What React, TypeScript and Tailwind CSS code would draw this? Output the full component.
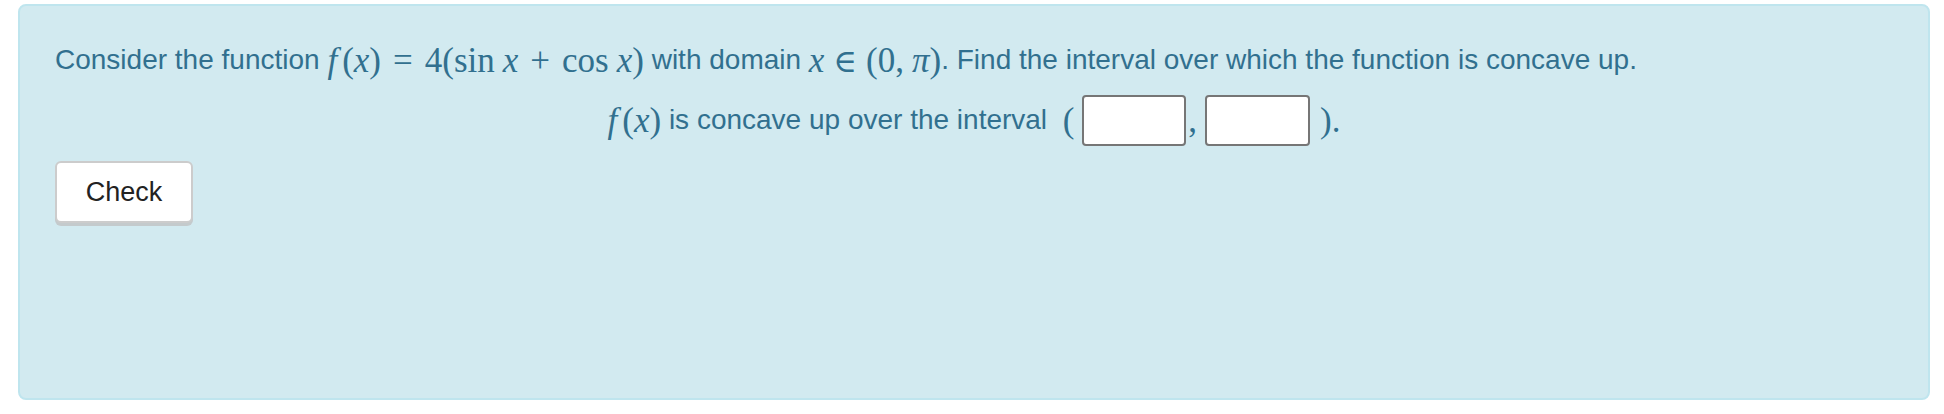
import React from "react";

const M = ({ children }: { children: React.ReactNode }) => (
  <span className="font-['Liberation_Serif',serif] text-[35px] leading-none">{children}</span>
);
const F = () => <i className="italic mr-[5px]">f</i>;
const X = () => <i className="italic">x</i>;

export default function App() {
  return (
    <div className="w-[1944px] h-[414px] bg-white pt-[4px] pl-[18px] font-['Liberation_Sans',Arial,sans-serif]">
      <div className="w-[1912px] h-[396px] bg-[#d2eaf0] border-2 border-[#bfe5ee] rounded-[8px] px-[35px] pt-[34px] text-[#31708f]">
        <div className="h-[40px] flex items-center text-[28px] whitespace-nowrap">
          <span>Consider the function&nbsp;</span>
          <M>
            <F />(<X />)<span className="mx-[12px]">=</span>4(sin<span className="ml-[8px]"><X /></span>
            <span className="mx-[12px]">+</span>cos<span className="ml-[8px]"><X /></span>)
          </M>
          <span>&nbsp;with domain&nbsp;</span>
          <M>
            <X />
            <span className="mx-[9px] font-['DejaVu_Serif',serif] text-[32px]">∈</span>(0,<span className="ml-[8px] italic">π</span>)
          </M>
          <span>. Find the interval over which the function is concave up.</span>
        </div>
        <div className="mt-[14px] h-[52px] flex items-center justify-center text-[28px] whitespace-nowrap">
          <M>
            <F />(<X />)
          </M>
          <span>&nbsp;is concave up over the interval&nbsp;&nbsp;</span>
          <M>(</M>
          <input className="ml-[8px] w-[104px] h-[51px] bg-white border-2 border-[#767676] rounded-[4px] outline-none" />
          <M>
            <span className="ml-[2px]">,</span>
          </M>
          <input className="ml-[8px] w-[105px] h-[51px] bg-white border-2 border-[#767676] rounded-[4px] outline-none" />
          <M>
            <span className="ml-[10px]">).</span>
          </M>
        </div>
        <button className="mt-[15px] w-[138px] h-[62px] bg-white border-2 border-[#cccccc] rounded-[6px] shadow-[0_3px_0_#c4cacc] text-[#222222] text-[27px] flex items-center justify-center">
          Check
        </button>
      </div>
    </div>
  );
}
